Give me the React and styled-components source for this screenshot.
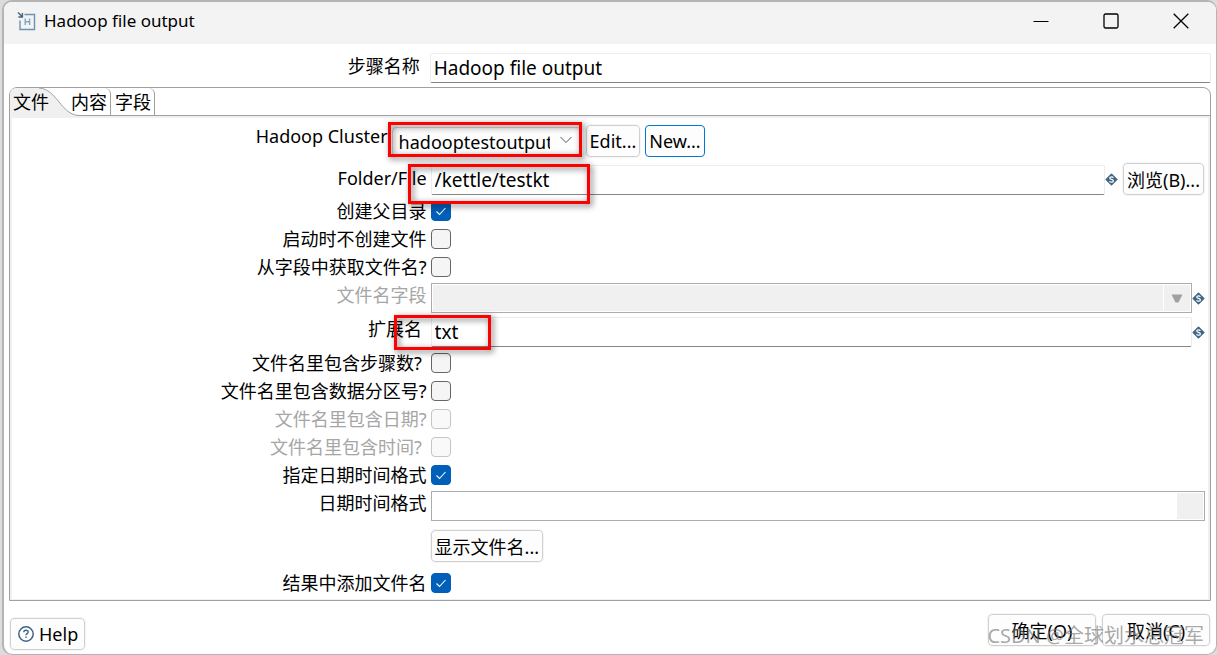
import styled, { createGlobalStyle, css } from 'styled-components';

const GlobalStyle = createGlobalStyle`
  * {
    box-sizing: border-box;
  }

  body {
    margin: 0;
    background: #dcdcdc;
    color: #000;
    font-family: 'Noto Sans', 'Noto Sans CJK SC', sans-serif;
    font-size: 18px;
  }

  button,
  input,
  select {
    margin: 0;
    color: inherit;
    font: inherit;
  }
`;

const Window = styled.main`
  position: relative;
  display: flex;
  flex-direction: column;
  min-height: 100vh;
  margin-left: 2px;
  border: 2px solid #b4b4b4;
  border-right-width: 1px;
  border-bottom-width: 1px;
  border-radius: 10px;
  background: #fff;
  overflow: hidden;
`;

const TitleBar = styled.header`
  display: flex;
  align-items: center;
  height: 42px;
  padding: 0 20px 4px 12px;
  background: #f3f3f3;
`;

const Title = styled.h1`
  flex: 1;
  margin: 0 0 0 8px;
  font-size: 17px;
  font-weight: 400;
  line-height: 38px;
`;

const WindowControls = styled.div`
  display: flex;
  gap: 39px;
`;

const ControlButton = styled.button`
  display: flex;
  align-items: center;
  justify-content: center;
  width: 31px;
  height: 32px;
  padding: 0;
  border: 0;
  background: none;
`;

const Content = styled.form`
  display: flex;
  flex: 1;
  flex-direction: column;
  padding: 9px 5px 4px;
`;

const StepRow = styled.div`
  display: grid;
  grid-template-columns: 35% 1fr;
  margin-bottom: 4px;
`;

const Label = styled.label`
  padding-top: ${({ $top }) => $top || 0}px;
  padding-right: ${({ $gap }) => $gap || 4}px;
  color: ${({ $disabled }) => ($disabled ? '#a6a6a6' : '#000')};
  line-height: ${({ $line }) => $line || 28}px;
  text-align: right;
  white-space: pre;
`;

const TextInput = styled.input`
  flex: 1;
  min-width: 0;
  width: 100%;
  height: 30px;
  padding: 0 3px;
  border: 1px solid #ececec;
  border-bottom-color: #868686;
  border-radius: 2px;
  background: #fff;
  font-size: 19px;
  outline: none;
`;

const TabFolder = styled.section`
  display: flex;
  flex: 1;
  flex-direction: column;
  border: 1px solid #a0a0a0;
  border-radius: 8px 8px 0 0;
`;

const TabBar = styled.div`
  display: flex;
  height: 28px;
  border-bottom: 1px solid #a0a0a0;
`;

const Tab = styled.button`
  position: relative;
  height: 27px;
  padding: 1px 3px 0 4px;
  border: 0;
  background: none;
  line-height: 26px;

  ${({ $selected }) =>
    $selected
      ? css`
          width: 57px;
          padding-left: 3px;
          text-align: left;
        `
      : css`
          border-right: 1px solid #a0a0a0;
          border-top-right-radius: 6px;
        `}
`;

const TabShape = styled.svg`
  position: absolute;
  top: 0;
  left: 0;
`;

const TabText = styled.span`
  position: relative;
`;

const TabBody = styled.div`
  flex: 1;
  padding-top: 4px;
  border: 2px solid #f0f0f0;
  border-bottom-width: 1px;
`;

const Row = styled.div`
  display: grid;
  grid-template-columns: ${({ $narrow }) => ($narrow ? 'calc(35% - 39px)' : '35%')} 1fr;
  min-height: ${({ $height }) => $height || 28}px;
`;

const Field = styled.div`
  position: relative;
  display: flex;
  align-items: flex-end;
  align-self: start;
  padding-top: ${({ $top }) => $top || 1}px;
  padding-right: ${({ $right }) => $right || 0}px;
`;

const CheckBox = styled.input`
  appearance: none;
  width: 20px;
  height: 20px;
  margin: 3px 0;
  border: 1px solid #666;
  border-radius: 4px;
  background: #f5f5f5;

  &:disabled {
    border-color: #c5c5c5;
    background: #f9f9f9;
  }

  &:checked {
    border-color: #005fb8;
    background: #005fb8;
  }
`;

const CheckField = styled.div`
  position: relative;
  height: 26px;
`;

const CheckMark = styled.svg`
  position: absolute;
  top: 3px;
  left: 0;
  pointer-events: none;
`;

const Button = styled.button`
  display: flex;
  flex: none;
  align-items: center;
  justify-content: center;
  gap: 4px;
  min-width: ${({ $wide }) => ($wide ? '108px' : '0')};
  height: 32px;
  padding: 0 ${({ $pad }) => $pad || 3}px;
  border: 1px solid ${({ $focused }) => ($focused ? '#0078d4' : '#d0d0d0')};
  border-radius: 4px;
  background: #fdfdfd;
  outline: 1px solid ${({ $focused }) => ($focused ? 'transparent' : '#f5f5f5')};
  white-space: nowrap;
`;

const ClusterSelect = styled.select`
  appearance: none;
  width: 189px;
  height: 30px;
  padding: 0 30px 0 6px;
  border: 1px solid #d4d4d4;
  border-radius: 4px;
  background: #fdfdfd;
  text-overflow: clip;
`;

const FieldButtons = styled.div`
  display: flex;
  gap: 5px;
  margin-left: 5px;
`;

const Chevron = styled.svg`
  position: absolute;
  top: 14px;
  left: 168px;
  pointer-events: none;
`;

const Combo = styled.div`
  display: flex;
  flex: 1;
  height: 30px;
  padding: 1px;
  border: 1px solid #ababb0;
  background: #fff;
`;

const ComboSelect = styled.select`
  appearance: none;
  flex: 1;
  min-width: 0;
  padding: 0 3px;
  border: 0;
  background: #fff;

  &:disabled {
    background: #f0f0f0;
    opacity: 1;
  }
`;

const ComboArrow = styled.span`
  display: flex;
  align-items: center;
  justify-content: center;
  width: 26px;
  margin-left: 1px;
  background: #f0f0f0;
`;

const VariableSvg = styled.svg`
  flex: none;
  align-self: center;
`;

const Footer = styled.footer`
  display: flex;
  align-items: flex-start;
  gap: 6px;
  height: 49px;
  padding: 13px 1px 0;
`;

const HelpSlot = styled.div`
  flex: 1;
  display: flex;
  padding-top: 4px;
`;

const Highlight = styled.span`
  position: absolute;
  z-index: 1;
  top: ${({ $top }) => $top}px;
  left: ${({ $left }) => $left}px;
  width: ${({ $width }) => $width}px;
  height: ${({ $height }) => $height}px;
  border: 3px solid #fe0000;
  filter: drop-shadow(2px 2px 3px rgba(0, 0, 0, 0.6));
  pointer-events: none;
`;

const Watermark = styled.span`
  position: absolute;
  right: 12px;
  bottom: 5px;
  color: rgba(120, 120, 120, 0.65);
  font-size: 20px;
  line-height: 26px;
  white-space: nowrap;
  pointer-events: none;
`;

const VariableIcon = () => (
  <VariableSvg width="13" height="13" viewBox="0 0 13 13" aria-hidden="true">
    <path d="M6.5 0.8 12.2 6.5 6.5 12.2 0.8 6.5Z" fill="#3d6585" stroke="#3d6585" strokeLinejoin="round" />
    <path
      d="M8.4 4.7C8 4 7.3 3.8 6.5 3.8 5.4 3.8 4.7 4.3 4.7 5.1 4.7 6.9 8.4 6 8.4 7.9 8.4 8.7 7.6 9.2 6.5 9.2 5.6 9.2 4.9 8.9 4.5 8.2"
      fill="none"
      stroke="#fff"
      strokeWidth="1.2"
    />
  </VariableSvg>
);

const CheckRow = ({ id, label, checked, disabled }) => (
  <Row>
    <Label htmlFor={id} $disabled={disabled} $line={26}>{label}</Label>
    <CheckField>
      <CheckBox type="checkbox" id={id} defaultChecked={checked} disabled={disabled} />
      {checked && (
        <CheckMark width="20" height="20" viewBox="0 0 20 20" aria-hidden="true">
          <path d="M5.5 10.5 8.5 13.5 14.5 7" fill="none" stroke="#fff" strokeWidth="1.1" />
        </CheckMark>
      )}
    </CheckField>
  </Row>
);

const App = () => {
  return (
    <>
      <GlobalStyle />
      <Window>
        <TitleBar>
          <svg width="20" height="20" viewBox="0 0 20 20" fill="none" aria-hidden="true">
            <path d="M8.5 3.5H18.5V18.5H4V9.5" stroke="#6d92ad" strokeWidth="1.4" />
            <path d="M2 1.5 6 5.5M6.4 2V6H2.4" stroke="#3d6585" strokeWidth="1.4" />
            <path d="M9.2 7.5V14M13.6 7.5V14M9.2 10.8H13.6" stroke="#7fa6c2" strokeWidth="1.4" />
          </svg>
          <Title>Hadoop file output</Title>
          <WindowControls>
            <ControlButton type="button" aria-label="Minimize">
              <svg width="16" height="16" viewBox="0 0 16 16">
                <path d="M0.5 8.5H15.5" stroke="#000" />
              </svg>
            </ControlButton>
            <ControlButton type="button" aria-label="Maximize">
              <svg width="16" height="16" viewBox="0 0 16 16">
                <rect x="1" y="1" width="14" height="14" rx="1.5" fill="none" stroke="#000" strokeWidth="1.3" />
              </svg>
            </ControlButton>
            <ControlButton type="button" aria-label="Close">
              <svg width="16" height="16" viewBox="0 0 16 16">
                <path d="M0.7 0.7 15.3 15.3M15.3 0.7 0.7 15.3" stroke="#000" strokeWidth="1.3" />
              </svg>
            </ControlButton>
          </WindowControls>
        </TitleBar>

        <Content>
          <StepRow>
            <Label htmlFor="step" $gap={10} $line={26}>步骤名称</Label>
            <TextInput id="step" defaultValue="Hadoop file output" />
          </StepRow>

          <TabFolder>
            <TabBar role="tablist">
              <Tab type="button" role="tab" aria-selected="true" $selected>
                <TabShape width="70" height="28" viewBox="0 0 70 28" aria-hidden="true">
                  <path d="M0 28V7Q0 0 7 0H29C47 1 51 27 69 27.5V28Z" fill="#f0f0f0" />
                  <path d="M29 0C47 1 51 27 69 27.5" fill="none" stroke="#a0a0a0" />
                </TabShape>
                <TabText>文件</TabText>
              </Tab>
              <Tab type="button" role="tab">内容</Tab>
              <Tab type="button" role="tab">字段</Tab>
            </TabBar>

            <TabBody role="tabpanel">
              <Row $narrow $height={40}>
                <Label htmlFor="cluster">Hadoop Cluster</Label>
                <Field $top={3}>
                  <ClusterSelect id="cluster">
                    <option>hadooptestoutput</option>
                  </ClusterSelect>
                  <Chevron width="12" height="8" viewBox="0 0 12 8" aria-hidden="true">
                    <path d="M0.5 1 6 6.5 11.5 1" fill="none" stroke="#555" />
                  </Chevron>
                  <FieldButtons>
                    <Button type="button">Edit...</Button>
                    <Button type="button" $focused>New...</Button>
                  </FieldButtons>
                  <Highlight $top={0} $left={-4} $width={194} $height={35} />
                </Field>
              </Row>

              <Row $height={36}>
                <Label htmlFor="folder" $top={2}>Folder/File</Label>
                <Field $right={4}>
                  <TextInput id="folder" defaultValue="/kettle/testkt" />
                  <VariableIcon />
                  <FieldButtons>
                    <Button type="button">浏览(B)...</Button>
                  </FieldButtons>
                  <Highlight $top={2} $left={-23} $width={182} $height={40} />
                </Field>
              </Row>

              <CheckRow id="parent" label="创建父目录" checked />
              <CheckRow id="nocreate" label="启动时不创建文件" />
              <CheckRow id="fromfield" label="从字段中获取文件名?" />

              <Row $height={34}>
                <Label htmlFor="namefield" $disabled $line={26}>文件名字段</Label>
                <Field $right={3}>
                  <Combo>
                    <ComboSelect id="namefield" disabled />
                    <ComboArrow>
                      <svg width="12" height="9" viewBox="0 0 12 9">
                        <path d="M0.5 0.5H11.5L7.5 8.5H4.5Z" fill="#a0a0a0" />
                      </svg>
                    </ComboArrow>
                  </Combo>
                  <VariableIcon />
                </Field>
              </Row>

              <Row $height={34}>
                <Label htmlFor="ext" $line={26}>{'扩展名 '}</Label>
                <Field $right={3}>
                  <TextInput id="ext" defaultValue="txt" />
                  <VariableIcon />
                  <Highlight $top={-1} $left={-37} $width={97} $height={35} />
                </Field>
              </Row>

              <CheckRow id="stepnr" label="文件名里包含步骤数? " />
              <CheckRow id="partnr" label="文件名里包含数据分区号?" />
              <CheckRow id="date" label="文件名里包含日期?" disabled />
              <CheckRow id="time" label="文件名里包含时间? " disabled />
              <CheckRow id="specify" label="指定日期时间格式" checked />

              <Row $height={34}>
                <Label htmlFor="format" $line={26}>日期时间格式</Label>
                <Field $right={3}>
                  <Combo>
                    <ComboSelect id="format" />
                    <ComboArrow />
                  </Combo>
                </Field>
              </Row>

              <Row $height={46}>
                <span />
                <Field $top={6}>
                  <Button type="button">显示文件名...</Button>
                </Field>
              </Row>

              <CheckRow id="addresult" label="结果中添加文件名" checked />
            </TabBody>
          </TabFolder>

          <Footer>
            <HelpSlot>
              <Button type="button" $pad={6}>
                <svg width="18" height="18" viewBox="0 0 18 18" fill="none" aria-hidden="true">
                  <circle cx="9" cy="9" r="7.2" stroke="#3d6585" strokeWidth="1.5" />
                  <path d="M6.8 7.2C6.8 5.9 7.7 5.2 9 5.2S11.2 6 11.2 7.1C11.2 8.6 9 8.6 9 10.3M9 11.6V13" stroke="#3d6585" strokeWidth="1.4" />
                </svg>
                Help
              </Button>
            </HelpSlot>
            <Button type="button" $wide>确定(O)</Button>
            <Button type="button" $wide>取消(C)</Button>
          </Footer>
        </Content>
        <Watermark>CSDN @全球划水总冠军</Watermark>
      </Window>
    </>
  );
};

export default App;
